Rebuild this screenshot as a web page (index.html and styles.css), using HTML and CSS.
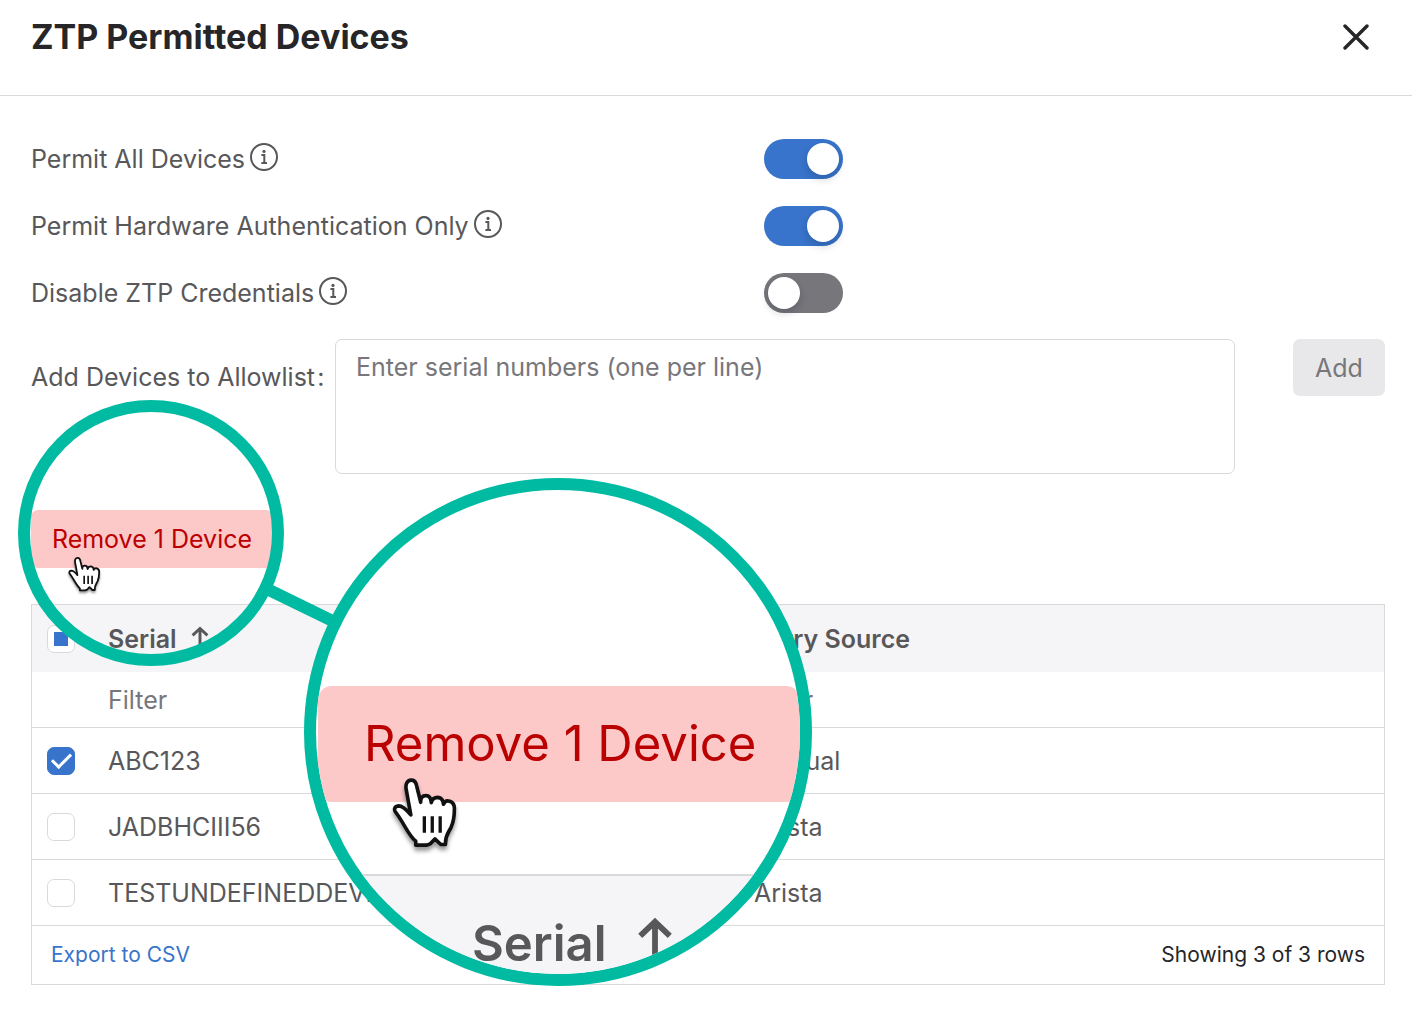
FILE: index.html
```
<!DOCTYPE html>
<html lang="en">
<head>
  <meta charset="UTF-8">
  <meta name="viewport" content="width=device-width, initial-scale=1.0">
  <title>ZTP Permitted Devices</title>
  <link rel="stylesheet" href="styles.css">
</head>
<body>
  <!-- Shared icons -->
  <svg class="sprite" aria-hidden="true">
    <symbol id="icon-info" viewBox="0 0 28 28">
      <circle cx="14" cy="14" r="13" fill="none" stroke="currentColor" stroke-width="2"/>
      <circle cx="14" cy="8.4" r="1.6" fill="currentColor"/>
      <path d="M11.4 12.1H14.3V20M11.4 20H17" fill="none" stroke="currentColor" stroke-width="2"/>
    </symbol>
    <symbol id="icon-arrow" viewBox="0 0 18 22">
      <path d="M9 21V2.5M1.6 9.4L9 2.4L16.4 9.4" fill="none" stroke="currentColor" stroke-width="2.9"/>
    </symbol>
    <symbol id="icon-hand" viewBox="0 0 200 220">
      <path d="M14 110C4 100 6 88 20 87C32 87 42 96 57 114L43 37C40 20 46 10 58 9C68 8 74 18 76 32L87 76C86 62 92 56 103 56C113 56 118 64 119 77C121 66 128 61 139 61C150 62 155 70 156 82C159 74 166 70 175 73C186 77 190 86 189 98C189 118 187 134 179 152C170 170 161 176 162 204H148L130 187L116 202L104 206H72V194C50 176 40 146 14 110Z" fill="#fff" stroke="#111" stroke-width="11" stroke-linejoin="round"/>
      <path d="M98 118V168M122 118V168M146 118V168" fill="none" stroke="#111" stroke-width="10"/>
    </symbol>
  </svg>

  <header class="header">
    <h1>ZTP Permitted Devices</h1>
    <button type="button" class="close-btn" aria-label="Close">
      <svg viewBox="0 0 26 26" width="26" height="26"><path d="M2 2L24 24M24 2L2 24" stroke="currentColor" stroke-width="3.4" stroke-linecap="round"/></svg>
    </button>
  </header>

  <main class="content">
    <div class="setting">
      <div class="setting-label">
        <label for="permitAll">Permit All Devices</label>
        <svg class="info"><use href="#icon-info"/></svg>
      </div>
      <input type="checkbox" class="toggle" id="permitAll" checked>
    </div>
    <div class="setting">
      <div class="setting-label">
        <label for="permitHardware">Permit Hardware Authentication Only</label>
        <svg class="info"><use href="#icon-info"/></svg>
      </div>
      <input type="checkbox" class="toggle" id="permitHardware" checked>
    </div>
    <div class="setting">
      <div class="setting-label">
        <label for="disableCredentials">Disable ZTP Credentials</label>
        <svg class="info"><use href="#icon-info"/></svg>
      </div>
      <input type="checkbox" class="toggle" id="disableCredentials">
    </div>

    <div class="add-devices">
      <label for="serials">Add Devices to Allowlist&hairsp;:</label>
      <textarea id="serials" placeholder="Enter serial numbers (one per line)"></textarea>
      <button type="button" class="add-btn" disabled>Add</button>
    </div>

    <section class="allowlist">
      <button type="button" class="remove-btn">Remove 1 Device</button>

      <div class="table-container">
        <table>
          <colgroup>
            <col class="col-check">
            <col>
            <col>
          </colgroup>
          <thead>
            <tr>
              <th><input type="checkbox" class="check partial" aria-label="Select all"></th>
              <th>Serial <svg class="sort"><use href="#icon-arrow"/></svg></th>
              <th>Entry Source</th>
            </tr>
            <tr class="filters">
              <td></td>
              <td><input type="text" placeholder="Filter" aria-label="Filter by serial"></td>
              <td><input type="text" placeholder="Filter" aria-label="Filter by entry source"></td>
            </tr>
          </thead>
          <tbody>
            <tr>
              <td><input type="checkbox" class="check" aria-label="Select ABC123" checked></td>
              <td>ABC123</td>
              <td>Manual</td>
            </tr>
            <tr>
              <td><input type="checkbox" class="check" aria-label="Select JADBHCIII56"></td>
              <td>JADBHCIII56</td>
              <td>Arista</td>
            </tr>
            <tr>
              <td><input type="checkbox" class="check" aria-label="Select TESTUNDEFINEDDEVICE"></td>
              <td>TESTUNDEFINEDDEVICE</td>
              <td>Arista</td>
            </tr>
          </tbody>
        </table>
        <div class="table-footer">
          <a href="#">Export to CSV</a>
          <span>Showing 3 of 3 rows</span>
        </div>
      </div>

      <!-- Magnifier callout over the remove button -->
      <div class="callout" aria-hidden="true">
        <div class="ring"></div>
        <svg class="connector" viewBox="0 0 80 50"><path d="M4 7.5L76 42.7" stroke="currentColor" stroke-width="12"/></svg>
        <svg class="hand"><use href="#icon-hand"/></svg>
        <div class="lens">
          <div class="lens-remove">Remove 1 Device</div>
          <div class="lens-head">Serial <svg class="lens-sort"><use href="#icon-arrow"/></svg></div>
          <svg class="lens-hand"><use href="#icon-hand"/></svg>
        </div>
      </div>
    </section>
  </main>
</body>
</html>
```
FILE: styles.css
```
* {
  box-sizing: border-box;
}

body {
  margin: 0;
  background-color: #fff;
  color: #58585a;
  font-family: Inter, "Liberation Sans", sans-serif;
  font-size: 25px;
  line-height: 32px;
}

button, input, textarea {
  margin: 0;
  font: inherit;
}

.sprite {
  position: absolute;
  width: 0;
  height: 0;
}

.header {
  display: flex;
  justify-content: space-between;
  align-items: center;
  padding: 13px 43px 34px 31px;
  border-bottom: 1px solid #dadadc;
  color: #262628;
}

h1 {
  margin: 0;
  font-size: 34px;
  font-weight: 700;
  line-height: 48px;
}

.close-btn {
  display: flex;
  padding: 0;
  border: none;
  background: none;
  color: inherit;
  cursor: pointer;
}

.content {
  padding: 29px 27px 24px 31px;
}

/* Settings */
.setting {
  display: grid;
  grid-template-columns: 13fr 11fr;
  align-items: center;
  height: 67px;
}

.setting-label {
  display: flex;
  gap: 5px;
}

.info {
  width: 28px;
  height: 28px;
}

.toggle {
  appearance: none;
  width: 79px;
  height: 40px;
  padding: 4px;
  border-radius: 20px;
  background-color: #77767b;
  cursor: pointer;
}

.toggle::before {
  content: "";
  display: block;
  width: 32px;
  height: 32px;
  border-radius: 50%;
  background-color: #fff;
  box-shadow: 0 4px 8px rgba(0, 20, 40, 0.2);
}

.toggle:checked {
  background-color: #3874cb;
}

.toggle:checked::before {
  margin-left: auto;
}

/* Add devices */
.add-devices {
  display: flex;
  align-items: flex-start;
  margin-top: 13px;
}

.add-devices label {
  flex: 0 0 304px;
  padding-top: 22px;
  white-space: nowrap;
}

.add-devices textarea {
  flex: 1;
  height: 135px;
  padding: 11px 20px;
  border: 1px solid #d9d9db;
  border-radius: 7px;
  resize: none;
}

::placeholder {
  color: #77777b;
  opacity: 1;
}

.add-btn {
  width: 92px;
  height: 57px;
  margin-left: 58px;
  border: none;
  border-radius: 7px;
  background-color: #e8e8ea;
  color: #77777b;
}

/* Allowlist */
.allowlist {
  position: relative;
  margin-top: 36px;
}

.remove-btn {
  display: block;
  width: 242px;
  height: 58px;
  padding: 0;
  border: none;
  border-radius: 7px;
  background-color: #fcc8c8;
  color: #ba0000;
  white-space: nowrap;
  cursor: pointer;
}

.table-container {
  margin-top: 36px;
  border: 1px solid #d9d9db;
}

table {
  width: 100%;
  table-layout: fixed;
  border-collapse: separate;
  border-spacing: 0;
}

.col-check {
  width: 60px;
}

th, td {
  height: 66px;
  padding: 0 16px;
  border-bottom: 1px solid #d9d9db;
  text-align: left;
}

th {
  height: 67px;
  border-bottom: none;
  background-color: #f5f5f8;
  font-weight: 600;
}

th:first-child, td:first-child {
  padding: 0 15px;
}

.filters td {
  height: 56px;
}

.filters input {
  display: block;
  width: 100%;
  padding: 0;
  border: none;
  outline: none;
}

.sort {
  width: 18px;
  height: 22px;
  margin-left: 8px;
}

.check {
  appearance: none;
  display: grid;
  place-items: center;
  width: 28px;
  height: 28px;
  border: 1px solid #d9d9db;
  border-radius: 7px;
  background-color: #fff;
}

.check:checked {
  border-color: #3874cb;
  background-color: #3874cb;
}

.check:checked::before {
  content: "";
  width: 16px;
  height: 8px;
  margin-bottom: 4px;
  border-bottom: 3px solid #fff;
  border-left: 3px solid #fff;
  transform: rotate(-45deg);
}

.check.partial::before {
  content: "";
  width: 14px;
  height: 14px;
  background-color: #3874cb;
}

.table-footer {
  display: flex;
  justify-content: space-between;
  align-items: center;
  height: 58px;
  padding: 0 19px;
  color: #262628;
  font-size: 21px;
}

.table-footer a {
  color: #3874cb;
  text-decoration: none;
}

/* Callout */
.callout {
  position: absolute;
  top: -110px;
  left: -13px;
  color: #00bba2;
  pointer-events: none;
}

.ring, .connector, .hand, .lens, .lens-hand {
  position: absolute;
}

.ring {
  width: 266px;
  height: 266px;
  border: 12px solid;
  border-radius: 50%;
}

.connector {
  top: 180px;
  left: 242px;
  width: 80px;
  height: 50px;
}

.hand {
  top: 156px;
  left: 50px;
  width: 33px;
  height: 37px;
  filter: drop-shadow(0 2px 1px rgba(0, 0, 0, 0.4));
}

.lens {
  top: 78px;
  left: 286px;
  width: 508px;
  height: 508px;
  padding-top: 196px;
  border: 12px solid;
  border-radius: 50%;
  background-color: #fff;
  overflow: hidden;
  font-size: 49px;
  line-height: 60px;
  white-space: nowrap;
}

.lens-remove {
  height: 116px;
  margin-left: 2px;
  padding: 28px 46px;
  border-radius: 14px;
  background-color: #fcc8c8;
  color: #ba0000;
}

.lens-head {
  height: 120px;
  margin-top: 72px;
  padding: 38px 156px;
  border-top: 2px solid #d9d9db;
  background-color: #f5f5f8;
  color: #58585a;
  font-weight: 600;
}

.lens-sort {
  width: 36px;
  height: 44px;
  margin-left: 18px;
}

.lens-hand {
  top: 287px;
  left: 76px;
  width: 66px;
  height: 73px;
  filter: drop-shadow(0 4px 2px rgba(0, 0, 0, 0.4));
}
```
